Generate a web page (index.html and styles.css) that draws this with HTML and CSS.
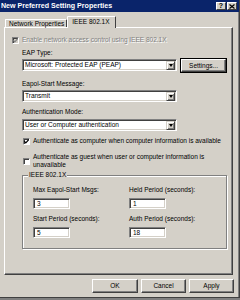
FILE: index.html
```html
<!DOCTYPE html>
<html>
<head>
<meta charset="utf-8">
<link rel="stylesheet" href="styles.css">
</head>
<body>
<div class="window">
  <div class="titlebar">
    <span class="title">New Preferred Setting Properties</span>
    <div class="tbtns">
      <span class="tbtn">?</span>
      <span class="tbtn x">
        <svg width="6" height="5" viewBox="0 0 6 5"><path d="M0.5 0.5L5.5 4.5M5.5 0.5L0.5 4.5" stroke="#000" stroke-width="1.2"/></svg>
      </span>
    </div>
  </div>
  <div class="tabs">
    <div class="tab">Network Properties</div>
    <div class="tab sel">IEEE 802.1X</div>
  </div>
  <div class="panel">
    <div class="row enable">
      <span class="cb disabled"><svg width="5" height="5" viewBox="0 0 5 5"><path d="M0.3 2.2L1.8 3.8L4.7 0.6" stroke="#808080" stroke-width="1.2" fill="none"/></svg></span>
      <span class="dis">Enable network access control using IEEE 802.1X</span>
    </div>
    <div class="sect">
      <div class="lbl l-eap">EAP Type:</div>
      <div class="ddrow">
        <div class="dd"><span class="ddtext">Microsoft: Protected EAP (PEAP)</span><span class="ddbtn"><i></i></span></div>
        <div class="btn settings">Settings...</div>
      </div>
      <div class="lbl l-eapol">Eapol-Start Message:</div>
      <div class="dd dd2"><span class="ddtext">Transmit</span><span class="ddbtn"><i></i></span></div>
      <div class="lbl l-auth">Authentication Mode:</div>
      <div class="dd dd3"><span class="ddtext">User or Computer authentication</span><span class="ddbtn"><i></i></span></div>
      <div class="row chk1">
        <span class="cb"><svg width="5" height="5" viewBox="0 0 5 5"><path d="M0.3 2.2L1.8 3.8L4.7 0.6" stroke="#000" stroke-width="1.2" fill="none"/></svg></span>
        <span>Authenticate as computer when computer information is available</span>
      </div>
      <div class="row chk2">
        <span class="cb"></span>
        <span>Authenticate as guest when user or computer information is<br>unavailable</span>
      </div>
      <div class="group">
        <div class="legend">IEEE 802.1X</div>
        <div class="grid">
          <div class="lbl">Max Eapol-Start Msgs:</div>
          <div class="lbl">Held Period (seconds):</div>
          <div class="inp">3</div>
          <div class="inp">1</div>
          <div class="lbl r2">Start Period (seconds):</div>
          <div class="lbl r2">Auth Period (seconds):</div>
          <div class="inp">5</div>
          <div class="inp">18</div>
        </div>
      </div>
    </div>
  </div>
  <div class="buttons">
    <div class="btn b-ok">OK</div>
    <div class="btn b-cancel">Cancel</div>
    <div class="btn b-apply">Apply</div>
  </div>
</div>
<div class="taskbar"></div>
</body>
</html>
```

FILE: styles.css
```css
* { box-sizing: border-box; }
html, body { margin: 0; padding: 0; }
body {
  width: 240px;
  height: 300px;
  overflow: hidden;
  background: #d4d0c8;
  font-family: "Liberation Sans", Arial, sans-serif;
  font-size: 6.5px;
  color: #000;
}
.window {
  height: 297px;
  border-right: 1px solid #404040;
  box-shadow: inset -1px 0 0 #808080;
}
.titlebar {
  height: 12px;
  background: #0a246a;
  display: flex;
  align-items: center;
  justify-content: space-between;
  padding: 0 2px 0 1px;
}
.title {
  color: #fff;
  font-weight: bold;
  font-size: 7.1px;
}
.tbtns { display: flex; gap: 1px; }
.tbtn {
  width: 10px;
  height: 8px;
  background: #d4d0c8;
  border: 1px solid;
  border-color: #fff #404040 #404040 #fff;
  font-weight: bold;
  font-size: 7px;
  line-height: 6px;
  text-align: center;
  display: flex;
  align-items: center;
  justify-content: center;
}
.tabs {
  display: flex;
  align-items: flex-end;
  margin-top: 4px;
  padding-left: 4px;
  height: 11px;
}
.tab {
  height: 8px;
  line-height: 8px;
  padding: 0 2px 0 3px;
  margin-left: 1px;
  border: 1px solid;
  border-bottom: none;
  border-color: #fff #404040 transparent #fff;
  border-radius: 1px 1px 0 0;
}
.tab.sel {
  height: 12px;
  line-height: 10px;
  padding: 0 5px 0 4px;
  margin-left: 0;
  margin-bottom: -1px;
  background: #d4d0c8;
  position: relative;
  z-index: 1;
}
.panel {
  margin-left: 4px;
  width: 229px;
  height: 248px;
  border: 1px solid;
  border-color: #fff #404040 #404040 #fff;
  box-shadow: inset -1px -1px 0 #808080;
  padding-left: 7px;
}
.row {
  display: flex;
  align-items: center;
  line-height: 8px;
}
.enable { margin-top: 8px; height: 8px; }
.enable .cb { margin-right: 3px; }
.cb {
  width: 7px;
  height: 7px;
  flex: none;
  background: #fff;
  border: 1px solid;
  border-color: #808080 #fff #fff #808080;
  box-shadow: inset 1px 1px 0 #404040;
  display: flex;
  align-items: center;
  justify-content: center;
}
.cb.disabled { background: #d4d0c8; }
.dis { color: #808080; text-shadow: 1px 1px 0 #fff; }
.sect { margin-left: 10px; }
.lbl { line-height: 8px; height: 8px; white-space: nowrap; }
.l-eap { margin-top: 5px; }
.l-eapol { margin-top: 8px; }
.l-auth { margin-top: 6px; }
.ddrow { display: flex; align-items: flex-start; margin-top: 2px; }
.dd {
  width: 155px;
  height: 12px;
  background: #fff;
  border: 1px solid;
  border-color: #808080 #fff #fff #808080;
  box-shadow: inset 1px 1px 0 #404040, inset -1px -1px 0 #d4d0c8;
  display: flex;
  align-items: center;
  justify-content: space-between;
  padding: 1px;
}
.dd2 { margin-top: 2px; }
.dd3 { margin-top: 3px; }
.ddtext { padding-left: 1px; line-height: 8px; }
.ddbtn {
  width: 9px;
  height: 9px;
  background: #d4d0c8;
  border: 1px solid;
  border-color: #d4d0c8 #404040 #404040 #d4d0c8;
  box-shadow: inset 1px 1px 0 #fff, inset -1px -1px 0 #808080;
  display: flex;
  align-items: center;
  justify-content: center;
}
.ddbtn i {
  width: 0;
  height: 0;
  border-left: 2.5px solid transparent;
  border-right: 2.5px solid transparent;
  border-top: 3px solid #000;
}
.btn {
  height: 13px;
  border: 1px solid;
  border-color: #fff #404040 #404040 #fff;
  box-shadow: inset -1px -1px 0 #808080;
  display: flex;
  align-items: center;
  justify-content: center;
  line-height: 8px;
}
.settings {
  width: 45px;
  margin-left: 4px;
  outline: 1px solid #000;
  outline-offset: 0;
}
.chk1 { margin-top: 6px; height: 8px; }
.chk1 .cb, .chk2 .cb { margin-left: 1px; margin-right: 3px; }
.chk2 { margin-top: 8px; height: 16px; }
.chk2 span:last-child { line-height: 8px; }
.group {
  margin-top: 6px;
  width: 205px;
  height: 74px;
  border: 1px solid #808080;
  box-shadow: inset 1px 1px 0 #fff, 1px 1px 0 #fff;
}
.legend {
  width: fit-content;
  margin: -5px 0 0 5px;
  padding: 0 1px;
  background: #d4d0c8;
  line-height: 8px;
  height: 8px;
}
.grid {
  display: grid;
  grid-template-columns: 96px 1fr;
  margin: 7px 0 0 10px;
}
.inp {
  width: 37px;
  height: 11px;
  margin-top: 4px;
  background: #fff;
  border: 1px solid;
  border-color: #808080 #fff #fff #808080;
  box-shadow: inset 1px 1px 0 #404040, inset -1px -1px 0 #d4d0c8;
  padding-left: 3px;
  line-height: 9px;
}
.r2 { margin-top: 6px; }
.buttons {
  display: flex;
  justify-content: flex-end;
  gap: 3px;
  margin-top: 4px;
  padding-right: 5px;
}
.buttons .btn { height: 14px; }
.b-ok { width: 46px; }
.b-cancel { width: 45px; }
.b-apply { width: 45px; }
.taskbar {
  height: 3px;
  background: #808080;
  border-top: 1px solid #404040;
}
```
